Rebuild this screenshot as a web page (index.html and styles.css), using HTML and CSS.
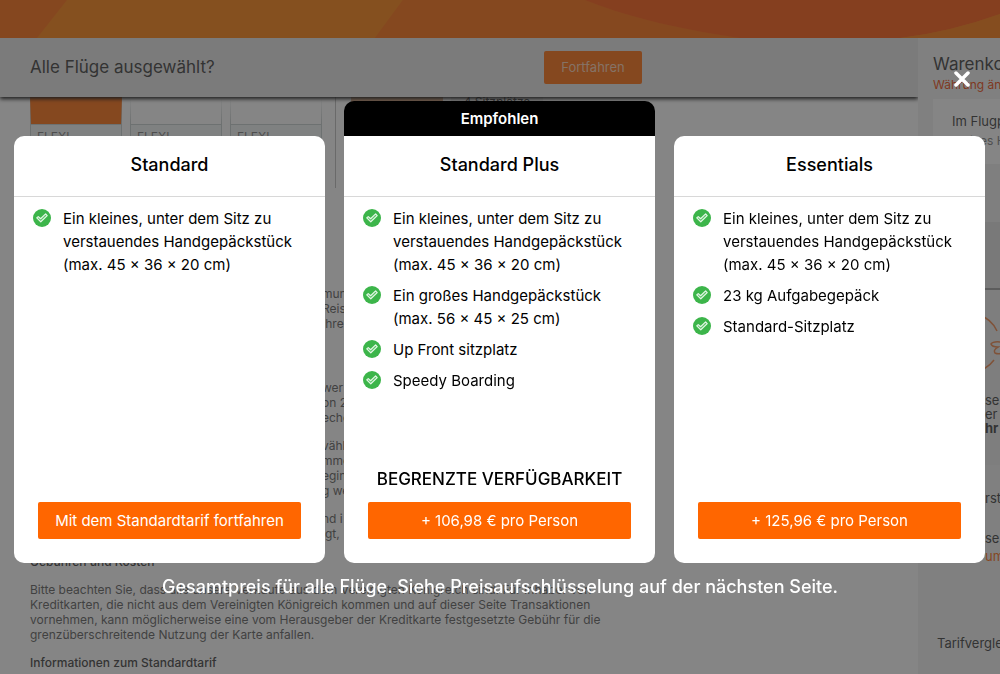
FILE: index.html
```html
<!DOCTYPE html>
<html lang="de">
<head>
	<meta charset="UTF-8">
	<meta name="viewport" content="width=device-width, initial-scale=1.0">
	<title>Flüge</title>
	<link rel="stylesheet" href="styles.css">
</head>
<body>
	<svg class="banner" viewBox="0 0 1000 38" preserveAspectRatio="none" aria-hidden="true">
		<rect width="1000" height="38" fill="#ff6e00"/>
		<path d="M0 0H67L37 38H0Z" fill="#ff6400"/>
		<path d="M67 0H403L375 38H37Z" fill="#ff7a00"/>
		<path d="M403 0H585C620 14 670 28 740 38H375Z" fill="#ff6600"/>
		<path d="M585 0H1000V14Q950 32 900 38H740C670 28 620 14 585 0Z" fill="#ff5000"/>
		<path d="M1000 14V38H900Q950 32 1000 14Z" fill="#ff7300"/>
	</svg>

	<div class="page">
		<main class="main">
			<div class="continue-bar">
				<h2>Alle Flüge ausgewählt?</h2>
				<button class="continue">Fortfahren</button>
			</div>
			<div class="fares">
				<div class="fare-group">
					<div class="fare selected"><span>FLEXI</span></div>
					<div class="fare"><span>FLEXI</span></div>
					<div class="fare"><span>FLEXI</span></div>
				</div>
				<div class="fare-group second">
					<div class="fare tan"></div>
					<div class="fare seats">4 Sitzplätze</div>
				</div>
			</div>
			<div class="terms">
				<p class="part">mun<br>Reis<br>Ihre</p>
				<p class="part second">wer<br>on 2<br>eche</p>
				<p class="part">vähl<br>mme<br>egin<br>g we</p>
				<p class="part">nd i<br>igt,</p>
				<h3>Gebühren und Kosten</h3>
				<p>Bitte beachten Sie, dass alle unsere Verkäufe aus dem Vereinigten Königreich sind. Für Inhaber von<br>Kreditkarten, die nicht aus dem Vereinigten Königreich kommen und auf dieser Seite Transaktionen<br>vornehmen, kann möglicherweise eine vom Herausgeber der Kreditkarte festgesetzte Gebühr für die<br>grenzüberschreitende Nutzung der Karte anfallen.</p>
				<h3>Informationen zum Standardtarif</h3>
			</div>
		</main>

		<aside class="basket">
			<h2>Warenkorb</h2>
			<a class="currency" href="#">Währung ändern</a>
			<div class="included">
				<strong>Im Flugpreis</strong>
				<span>Kleines Handgepäck</span>
			</div>
			<div class="row"></div>
			<div class="total"></div>
			<div class="promo">
				<svg viewBox="0 0 80 80" aria-hidden="true">
					<path d="M64 26A29 29 0 1 0 61 55"/>
					<path d="M80 30Q70 33 68 37Q60 36 58 39Q59 42 65 42Q60 45 62 48Q66 50 71 47Q66 51 69 53Q74 55 80 50"/>
				</svg>
				<p>se<br>er<br><b>hr</b></p>
			</div>
			<div class="notes">
				<p>rstatt</p>
				<p>se<br><a href="#">um</a></p>
			</div>
			<p class="compare">Tarifvergleich</p>
		</aside>
	</div>

	<div class="overlay">
		<button class="close" aria-label="Schließen">
			<svg viewBox="0 0 16 16"><path d="M2 2L14 14M14 2L2 14"/></svg>
		</button>
		<svg class="symbols" aria-hidden="true">
			<symbol id="tick" viewBox="0 0 18 18">
				<circle cx="9" cy="9" r="9" fill="#3cb54a"/>
				<path d="M3.8 8.8L5.3 7.6L7.6 9.7L12.6 4.9L14.2 6.6L7.8 12.8Z" fill="#5cc468" stroke="#e4f7e6" stroke-width="1.2" stroke-linejoin="round"/>
			</symbol>
		</svg>
		<div class="bundles">
			<section class="bundle">
				<h2>Standard</h2>
				<ul>
					<li><svg><use href="#tick"/></svg>Ein kleines, unter dem Sitz zu<br>verstauendes Handgepäckstück<br>(max. 45 × 36 × 20 cm)</li>
				</ul>
				<button>Mit dem Standardtarif fortfahren</button>
			</section>
			<section class="bundle recommended">
				<div class="badge">Empfohlen</div>
				<h2>Standard Plus</h2>
				<ul>
					<li><svg><use href="#tick"/></svg>Ein kleines, unter dem Sitz zu<br>verstauendes Handgepäckstück<br>(max. 45 × 36 × 20 cm)</li>
					<li><svg><use href="#tick"/></svg>Ein großes Handgepäckstück<br>(max. 56 × 45 × 25 cm)</li>
					<li><svg><use href="#tick"/></svg>Up Front sitzplatz</li>
					<li><svg><use href="#tick"/></svg>Speedy Boarding</li>
				</ul>
				<p class="limited">BEGRENZTE VERFÜGBARKEIT</p>
				<button>+ 106,98 € pro Person</button>
			</section>
			<section class="bundle">
				<h2>Essentials</h2>
				<ul>
					<li><svg><use href="#tick"/></svg>Ein kleines, unter dem Sitz zu<br>verstauendes Handgepäckstück<br>(max. 45 × 36 × 20 cm)</li>
					<li><svg><use href="#tick"/></svg>23 kg Aufgabegepäck</li>
					<li><svg><use href="#tick"/></svg>Standard-Sitzplatz</li>
				</ul>
				<button>+ 125,96 € pro Person</button>
			</section>
		</div>
		<p class="total-note">Gesamtpreis für alle Flüge. Siehe Preisaufschlüsselung auf der nächsten Seite.</p>
	</div>
</body>
</html>
```

FILE: styles.css
```css
* {
	box-sizing: border-box;
}

body {
	margin: 0;
	height: 100vh;
	overflow: hidden;
	font-family: Inter, "Open Sans", sans-serif;
	color: #333;
	background: #fff;
}

h2, h3, p, ul {
	margin: 0;
	padding: 0;
}

button {
	font-family: inherit;
	border: none;
	border-radius: 2px;
	background: #f60;
	color: #fff;
	cursor: pointer;
}

.banner {
	display: block;
	width: 100%;
	height: 38px;
}

.page {
	display: grid;
	grid-template-columns: minmax(0, 1fr) 82px;
}

.main {
	background: #fff;
}

.continue-bar {
	display: flex;
	align-items: center;
	justify-content: space-between;
	height: 59px;
	padding: 0 276px 1px 30px;
	background: #e6e6e6;
	box-shadow: 0 2px 4px #000;
	position: relative;
	clip-path: inset(0 0 -8px 0);
}

.continue-bar h2 {
	font-size: 17px;
	font-weight: 400;
}

.continue {
	width: 98px;
	height: 33px;
	font-size: 13px;
	color: #ffd0b0;
}

/* fares */
.fares {
	display: flex;
	height: 91px;
	padding-left: 30px;
}

.fare-group {
	display: flex;
	gap: 8px;
	width: 306px;
	border-right: 1px solid #bbb;
}

.fare-group.second {
	padding-left: 15px;
	border: none;
}

.fare {
	width: 92px;
	border: 1px solid #c4cccc;
	border-top: 27px solid #fff;
	background: #f0f4f4;
	font-size: 12px;
}

.fare span {
	display: block;
	padding: 4px 6px;
	border-top: 1px solid #c4cccc;
	color: #777;
}

.fare.selected {
	border-top-color: #f60;
}

.fare.tan {
	border-top-color: #d8a078;
}

.fare.seats {
	border: none;
	text-align: center;
	line-height: 10px;
	background: #eee;
}

/* terms */
.terms {
	padding: 98px 30px 0;
	font-size: 12px;
	line-height: 15px;
	color: #555;
	white-space: nowrap;
}

.terms p {
	margin-bottom: 13px;
}

.terms .part {
	padding-left: 292px;
}

.terms .part.second {
	padding-top: 36px;
}

.terms h3 {
	margin-bottom: 13px;
	font-size: 12px;
	font-weight: 500;
	color: #333;
}

/* basket */
.basket {
	overflow: hidden;
	padding: 16px 0 0 15px;
	background: #f2f2f2;
	white-space: nowrap;
}

.basket h2 {
	font-size: 17px;
	font-weight: 400;
	line-height: 20px;
}

.currency {
	display: block;
	margin-top: 3px;
	font-size: 12px;
	line-height: 16px;
	color: #f04000;
	text-decoration: none;
}

.included {
	display: flex;
	flex-direction: column;
	height: 65px;
	margin-top: 6px;
	padding: 13px 0 0 19px;
	background: #fff;
	font-size: 12px;
	line-height: 19px;
	color: #777;
}

.included strong {
	font-size: 13px;
	font-weight: 400;
	color: #333;
}

.row {
	height: 58px;
	background: #f0f0f0;
}

.total {
	height: 68px;
	background: #e0e0e0;
	border-bottom: 2px solid #999;
}

.promo {
	height: 175px;
	padding: 15px 0 0;
	background: #eee;
	font-size: 13px;
	line-height: 14px;
}

.promo svg {
	display: block;
	width: 80px;
	height: 80px;
	fill: none;
	stroke: #f08040;
	stroke-width: 1.5;
}

.promo p {
	padding: 8px 0 0 52px;
}

.notes {
	padding: 24px 0 0 52px;
	font-size: 13px;
	line-height: 18px;
}

.notes p + p {
	margin-top: 22px;
}

.notes a {
	color: #f60;
	text-decoration: none;
}

.compare {
	padding: 70px 0 30px 4px;
	font-size: 13px;
}

/* bundle dialog */
.overlay {
	position: fixed;
	inset: 0;
	padding-top: 136px;
	background: rgba(51, 51, 51, 0.6);
	color: #000;
}

.symbols {
	display: none;
}

.close {
	position: absolute;
	top: 71px;
	right: 30px;
	width: 16px;
	height: 16px;
	padding: 0;
	background: none;
}

.close svg {
	display: block;
	fill: none;
	stroke: #fff;
	stroke-width: 3.5;
	stroke-linecap: round;
}

.bundles {
	display: grid;
	grid-template-columns: repeat(3, 1fr);
	gap: 19px;
	padding: 0 15px 0 14px;
}

.bundle {
	position: relative;
	display: flex;
	flex-direction: column;
	padding-bottom: 24px;
	border-radius: 10px;
	background: #fff;
}

.bundle.recommended {
	border-radius: 0 0 10px 10px;
}

.badge {
	position: absolute;
	bottom: 100%;
	left: 0;
	right: 0;
	border-radius: 10px 10px 0 0;
	background: #000;
	color: #fff;
	font-size: 15px;
	font-weight: 600;
	line-height: 35px;
	text-align: center;
}

.bundle h2 {
	padding-bottom: 2px;
	border-bottom: 1px solid #d8d8d8;
	font-size: 18px;
	font-weight: 500;
	line-height: 58px;
	text-align: center;
}

.bundle ul {
	display: flex;
	flex-direction: column;
	flex: 1;
	gap: 8px;
	padding: 10px 19px 75px 49px;
	list-style: none;
	font-size: 15px;
	line-height: 23px;
	white-space: nowrap;
}

.bundle li svg {
	float: left;
	width: 18px;
	height: 18px;
	margin: 2px 0 0 -30px;
}

.limited {
	padding-bottom: 11px;
	font-size: 17px;
	font-weight: 500;
	line-height: 24px;
	text-align: center;
}

.bundle button {
	height: 37px;
	margin: 0 24px;
	font-size: 15px;
}

.total-note {
	padding-top: 12px;
	font-size: 18px;
	font-weight: 500;
	line-height: 24px;
	text-align: center;
	color: #fff;
}
```
